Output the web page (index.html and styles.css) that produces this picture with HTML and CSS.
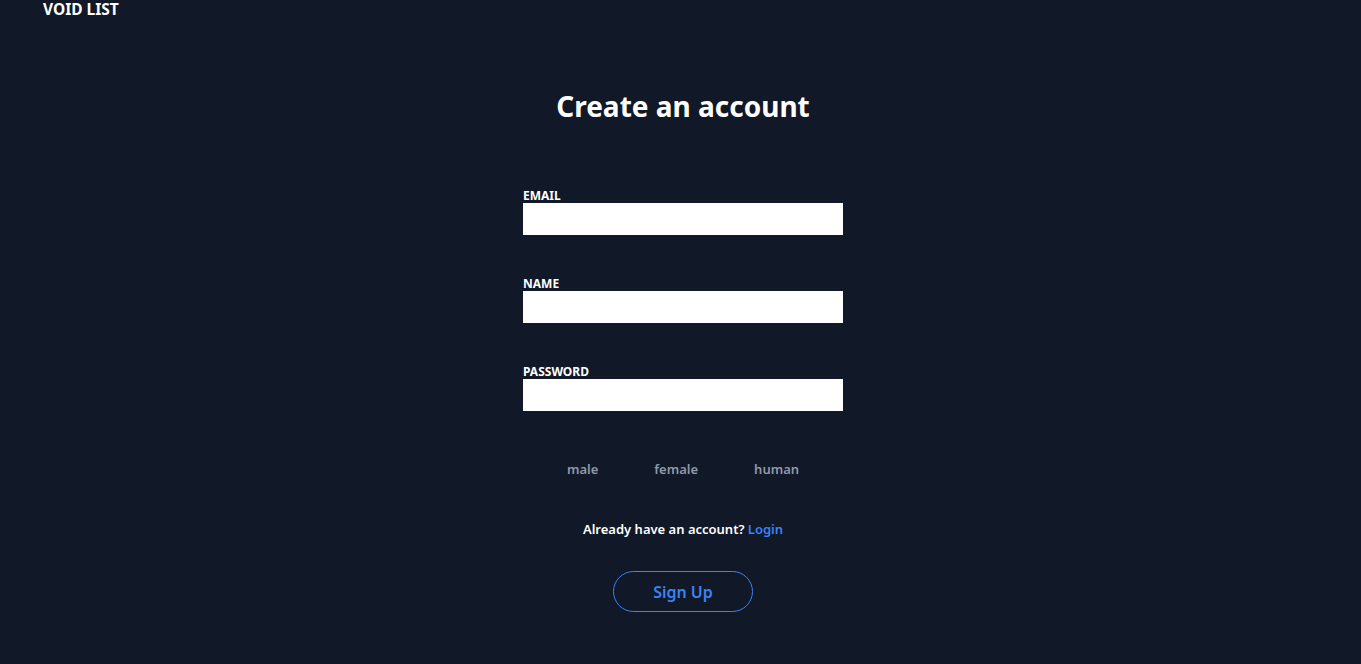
FILE: index.html
```html
<!DOCTYPE html>
<html lang="en">
<head>
<meta charset="utf-8">
<title>Void List - Sign Up</title>
<link rel="stylesheet" href="styles.css">
</head>
<body>
<header class="topbar">
  <span class="brand">VOID LIST</span>
</header>
<main class="page">
  <h1 class="title">Create an account</h1>
  <form class="form">
    <div class="field">
      <label class="label" for="email">EMAIL</label>
      <input class="input" id="email" type="email">
    </div>
    <div class="field">
      <label class="label" for="name">NAME</label>
      <input class="input" id="name" type="text">
    </div>
    <div class="field">
      <label class="label" for="password">PASSWORD</label>
      <input class="input" id="password" type="password">
    </div>
    <div class="genders">
      <label class="gender"><input type="radio" name="gender" class="radio">male</label>
      <label class="gender"><input type="radio" name="gender" class="radio">female</label>
      <label class="gender"><input type="radio" name="gender" class="radio">human</label>
    </div>
    <p class="switch">Already have an account? <a class="link" href="#">Login</a></p>
    <button class="btn" type="button">Sign Up</button>
  </form>
</main>
</body>
</html>
```
FILE: styles.css
```css
* { box-sizing: border-box; }
html, body { margin: 0; padding: 0; }
body {
  background: #111827;
  color: #ffffff;
  font-family: "Noto Sans", "Open Sans", sans-serif;
  min-height: 664px;
}
.topbar {
  padding: 0 43px;
  height: 20px;
}
.brand {
  font-size: 15.5px;
  font-weight: 700;
  line-height: 19px;
  display: block;
}
.page {
  display: flex;
  flex-direction: column;
  align-items: center;
  padding-left: 5px;
}
.title {
  margin: 68px 0 0;
  font-size: 28px;
  line-height: 36px;
  font-weight: 700;
}
.form {
  width: 320px;
  margin-top: 63px;
  display: flex;
  flex-direction: column;
  align-items: center;
}
.field {
  width: 100%;
  display: flex;
  flex-direction: column;
  margin-bottom: 40px;
}
.label {
  font-size: 12px;
  font-weight: 700;
  line-height: 14px;
  height: 16px;
  padding-top: 2px;
}
.input {
  width: 320px;
  height: 32px;
  border: 0;
  background: #ffffff;
  margin: 0;
  padding: 0 8px;
}
.genders {
  display: flex;
  justify-content: center;
  gap: 56px;
  margin-top: 0;
}
.gender {
  font-size: 13px;
  font-weight: 600;
  color: #8e99ab;
  line-height: 36px;
}
.radio { display: none; }
.switch {
  margin: 32px 0 0;
  font-size: 13px;
  font-weight: 600;
  line-height: 20px;
}
.link { color: #3b82f6; text-decoration: none; }
.btn {
  margin-top: 32px;
  width: 140px;
  height: 41px;
  border: 1px solid #3b82f6;
  border-radius: 999px;
  background: transparent;
  color: #3b82f6;
  font-family: inherit;
  font-size: 16px;
  font-weight: 600;
}
```
